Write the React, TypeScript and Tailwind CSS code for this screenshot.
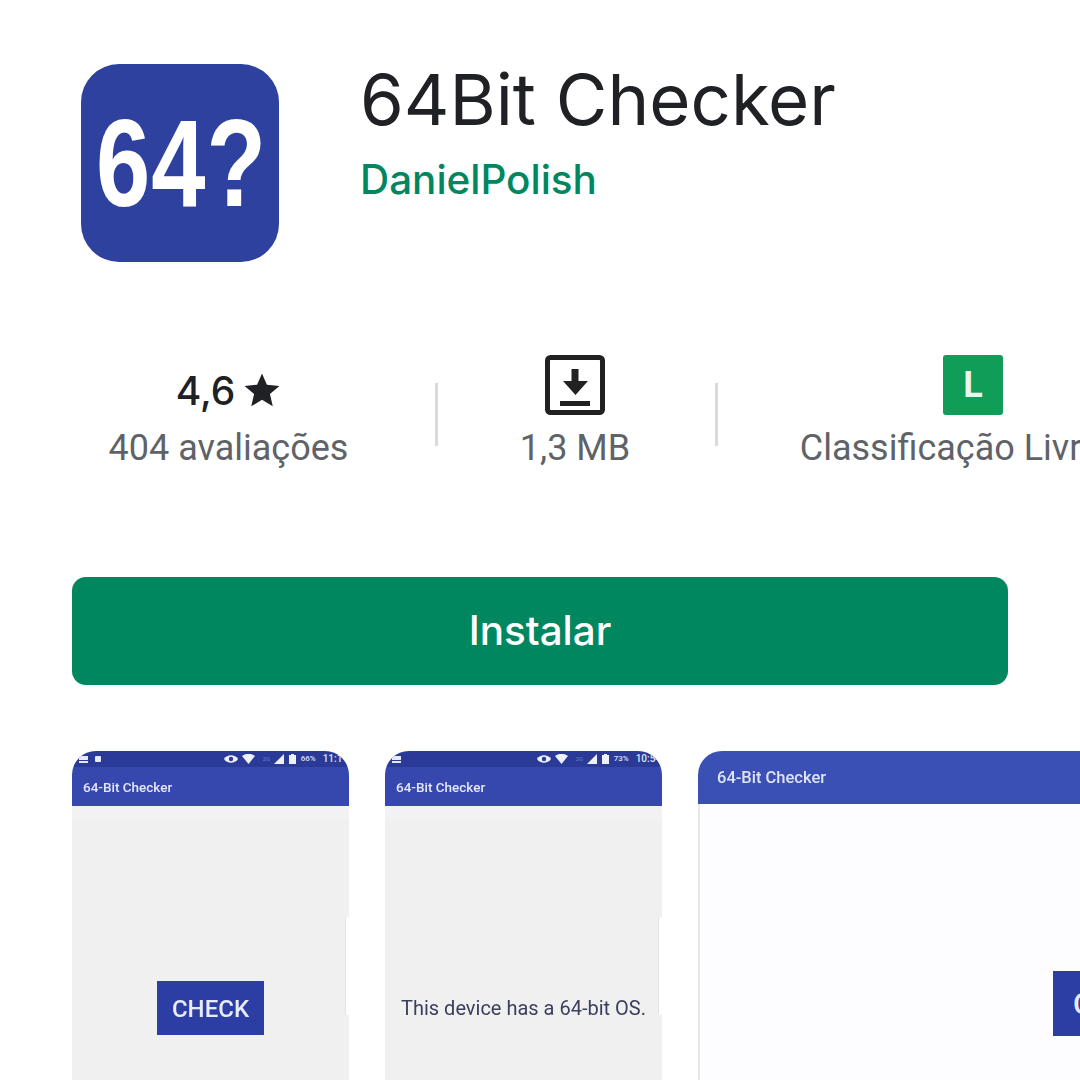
import React from 'react';
import { Info } from 'lucide-react';

const FONT = "font-['Roboto','Liberation_Sans',sans-serif]";
const DISPLAY = "font-['Inter','Roboto',sans-serif]";

const StatusIcons: React.FC<{ battery: string; time: string }> = ({ battery, time }) => (
  <div className="flex items-center gap-[3px] text-[8px] leading-none font-medium text-[#dfe3f5]">
    <svg width="14" height="10" viewBox="0 0 14 10" className="mr-[1px]">
      <path d="M0 5 C3 0 11 0 14 5 C11 10 3 10 0 5Z" fill="#eef0fa" />
      <circle cx="7" cy="5" r="2.2" fill="#2b3a97" />
    </svg>
    <svg width="13" height="10" viewBox="0 0 13 10">
      <path d="M0 2 C4 -1 9 -1 13 2 L6.5 10Z" fill="#eef0fa" />
    </svg>
    <span className="ml-[5px] w-[8px] text-[6px] text-[#5f6fc0]">2G</span>
    <svg width="10" height="10" viewBox="0 0 10 10">
      <path d="M10 0 V10 H0Z" fill="#eef0fa" />
    </svg>
    <svg width="7" height="10" viewBox="0 0 7 10" className="ml-[2px]">
      <path d="M2 0 H5 V1 H7 V10 H0 V1 H2Z" fill="#eef0fa" />
    </svg>
    <span className="ml-[2px] text-[8px]">{battery}</span>
    <span className="ml-[4px] whitespace-nowrap text-[10px]">{time}</span>
  </div>
);

const PhoneShot: React.FC<{ battery: string; time: string; extra?: boolean; children: React.ReactNode }> = ({
  battery,
  time,
  extra,
  children,
}) => (
  <div className="relative flex h-[340px] w-[277px] shrink-0 flex-col overflow-hidden rounded-t-[24px] bg-[#f0f0f1]">
    <div className="flex h-[16px] shrink-0 items-center justify-between bg-[#2b3a97] pr-[1px] pl-[7px]">
      <div className="flex items-center gap-[7px]">
        <svg width="9" height="9" viewBox="0 0 9 9">
          <path d="M0 1 H9 V8 H0Z" fill="#e6e9f7" />
          <path d="M0 5 H9 V6 H0Z" fill="#2b3a97" />
        </svg>
        {extra && <div className="h-[6px] w-[6px] rounded-[1px] bg-[#e6e9f7]" />}
      </div>
      <StatusIcons battery={battery} time={time} />
    </div>
    <div className="flex h-[39px] shrink-0 items-center bg-[#3647ae] pt-[2px] pl-[11px] text-[13.5px] font-medium text-[#e4e8f8] blur-[0.3px]">
      64-Bit Checker
    </div>
    <div className="h-[14px] shrink-0 bg-[#f2f1f3]" />
    {children}
    <div className="absolute top-[166px] right-0 h-[98px] w-[4px] rounded-l-[2px] border-l border-[#e4e4e8] bg-white" />
  </div>
);

export default function App() {
  return (
    <div className={`h-[1080px] w-[1080px] overflow-hidden bg-white ${FONT}`}>
      {/* App header */}
      <div className="flex pt-[64px] pl-[81px]">
        <div className="flex h-[198px] w-[198px] shrink-0 items-center justify-center rounded-[38px] bg-[#2f419f] pl-[4px]">
          <span className="mt-[-1px] scale-x-[0.78] font-['Liberation_Sans',sans-serif] text-[125px] leading-none font-bold tracking-[0.01em] text-white">
            64?
          </span>
        </div>
        <div className={`ml-[81px] flex flex-col ${DISPLAY}`}>
          <h1 className="mt-[-6px] text-[70.7px] leading-[84px] font-normal text-[#202124]">64Bit Checker</h1>
          <div className="mt-[14px] text-[40.4px] leading-[48px] font-medium text-[#01875f]">DanielPolish</div>
        </div>
      </div>

      {/* Stats */}
      <div className="mt-[93px] ml-[22px] flex items-start">
        <div className="flex w-[413px] shrink-0 flex-col items-center">
          <div className="flex h-[60px] items-center gap-[8px] pt-[10px]">
            <span className={`text-[39px] leading-none font-medium text-[#202124] ${DISPLAY}`}>4,6</span>
            <svg width="38" height="38" viewBox="0 0 24 24" fill="#202124">
              <path d="M12 1.5l3.1 7.2 7.9.7-6 5.2 1.8 7.7L12 18.2l-6.8 4.1L7 14.6 1 9.4l7.9-.7z" />
            </svg>
          </div>
          <div className="mt-[10px] text-[36px] leading-[46px] whitespace-nowrap text-[#5f6368]">404 avaliações</div>
        </div>
        <div className="mt-[28px] h-[63px] w-[3px] shrink-0 bg-[#dadada]" />
        <div className="flex w-[277px] shrink-0 flex-col items-center pr-[3px]">
          <svg width="60" height="60" viewBox="0 0 60 60">
            <rect x="2.5" y="2.5" width="55" height="55" rx="3" fill="none" stroke="#212121" strokeWidth="5" />
            <path d="M26.5 14 H33.5 V26 H43 L30.5 40 L18 26 H26.5Z" fill="#212121" />
            <rect x="15" y="46" width="30" height="5" fill="#212121" />
          </svg>
          <div className="mt-[10px] text-[36px] leading-[46px] whitespace-nowrap text-[#5f6368]">1,3 MB</div>
        </div>
        <div className="mt-[28px] h-[63px] w-[3px] shrink-0 bg-[#dadada]" />
        <div className="flex w-[510px] shrink-0 flex-col items-center">
          <div className="flex h-[60px] w-[60px] items-center justify-center rounded-[3px] bg-[#0f9d58] text-[36px] leading-none font-bold text-[#e8f7ee]">
            L
          </div>
          <div className="mt-[10px] flex items-center gap-[10px] text-[36px] leading-[46px] whitespace-nowrap text-[#5f6368]">
            Classificação Livre
            <Info size={36} />
          </div>
        </div>
      </div>

      {/* Install */}
      <div className="mt-[106px] px-[72px]">
        <button className={`flex h-[108px] w-[936px] items-center justify-center rounded-[14px] bg-[#01875f] text-[40.4px] font-medium text-white ${DISPLAY}`}>
          Instalar
        </button>
      </div>

      {/* Screenshots */}
      <div className="mt-[66px] flex gap-[36px] pl-[72px]">
        <PhoneShot battery="66%" time="11:11" extra>
          <div className="flex flex-1 justify-center pt-[161px]">
            <div className="flex h-[54px] w-[107px] items-center justify-center bg-[#2c3ea3] pt-[2px] text-[24px] font-medium text-[#e8ebf8] blur-[0.3px]">
              CHECK
            </div>
          </div>
        </PhoneShot>
        <PhoneShot battery="73%" time="10:54">
          <div className="flex-1 pt-[175px] text-center text-[20px] leading-[26px] whitespace-nowrap text-[#3b3e5c] blur-[0.3px]">
            This device has a 64-bit OS.
          </div>
        </PhoneShot>
        <div className="flex h-[340px] w-[500px] shrink-0 flex-col overflow-hidden rounded-t-[24px] bg-[#fdfcfe]">
          <div className="flex h-[53px] shrink-0 items-center bg-[#3a50b4] pt-[2px] pl-[19px] text-[16.5px] font-medium text-[#dfe4f7] blur-[0.3px]">
            64-Bit Checker
          </div>
          <div className="flex flex-1 border-l-2 border-[#e6e6ea] pt-[167px] pl-[353px]">
            <div className="flex h-[65px] w-[100px] items-center bg-[#2c3ea3] pl-[20px] text-[30px] font-medium text-[#e8ebf8]">
              C
            </div>
          </div>
        </div>
      </div>
    </div>
  );
}
